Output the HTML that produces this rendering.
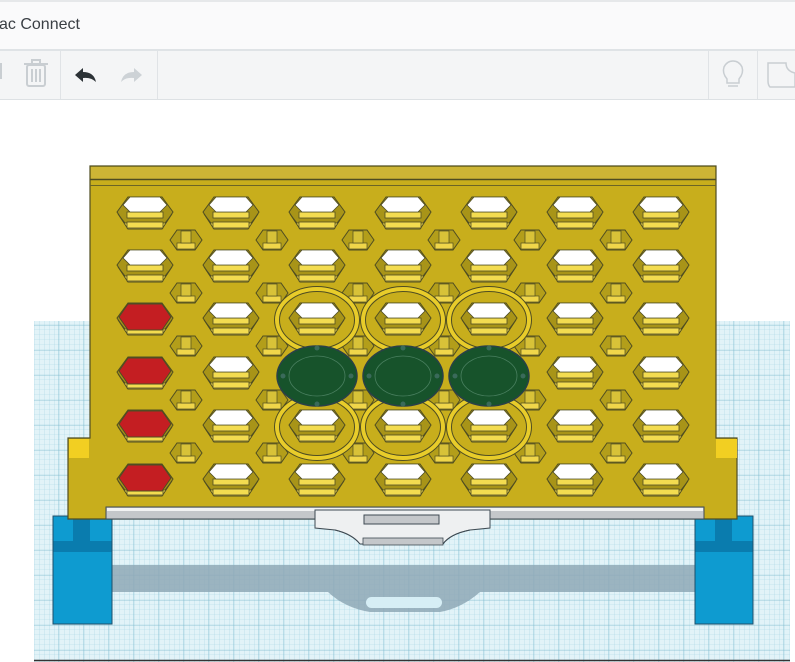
<!DOCTYPE html>
<html><head><meta charset="utf-8"><style>
body{margin:0;width:795px;height:662px;overflow:hidden;background:#fff;font-family:"Liberation Sans",sans-serif}
#hdr{position:absolute;left:0;top:0;width:795px;height:51px;background:#fafafb;border-top:2px solid #e6e8ea;box-sizing:border-box;border-bottom:2px solid #dfe3e6}
#hdr span{position:absolute;left:-1px;top:14px;font-size:16px;color:#3a3f44}
#tb{position:absolute;left:0;top:51px;width:795px;height:48px;background:#f4f5f6;border-bottom:1px solid #dde1e4}
</style></head><body>
<div id="hdr"><span>ac Connect</span></div>
<div id="tb">
<svg width="795" height="48" style="position:absolute;left:0;top:0">
<line x1="60.5" y1="0" x2="60.5" y2="48" stroke="#e0e3e6"/>
<line x1="157.5" y1="0" x2="157.5" y2="48" stroke="#e0e3e6"/>
<line x1="708.5" y1="0" x2="708.5" y2="48" stroke="#e0e3e6"/>
<line x1="757.5" y1="0" x2="757.5" y2="48" stroke="#e0e3e6"/>
<rect x="-2" y="12" width="4" height="16" fill="#c9ced2"/>
<g fill="none" stroke="#c9ced2" stroke-width="2"><rect x="27" y="14" width="18" height="21" rx="2"/><line x1="24" y1="13" x2="48" y2="13"/><rect x="32" y="9" width="8" height="4"/><line x1="32" y1="18" x2="32" y2="31"/><line x1="36" y1="18" x2="36" y2="31"/><line x1="40" y1="18" x2="40" y2="31"/></g>
<path d="M75 24 L83 17 L83 21 Q94 21 96 31 Q91 26 83 27 L83 31 Z" fill="#2c3236"/>
<path d="M142 24 L134 17 L134 21 Q123 21 121 31 Q126 26 134 27 L134 31 Z" fill="#cdd2d6"/>
<g fill="none" stroke="#c9ced2" stroke-width="1.5"><path d="M727 28 Q722 22 724 16 Q727 10 733 10 Q739 10 742 16 Q744 22 739 28 L739 32 L727 32 Z"/><line x1="728" y1="35" x2="738" y2="35"/><path d="M768 12 L786 12 Q786 20 795 22 L795 36 L770 36 Q768 34 768 30 Z"/></g>
</svg></div>
<svg width="795" height="562" style="position:absolute;left:0;top:100px" viewBox="0 100 795 562">
<defs>
<pattern id="g1" width="5" height="5" patternUnits="userSpaceOnUse"><path d="M5 0V5H0" fill="none" stroke="#a9d5e3" stroke-width="0.6"/></pattern>
<pattern id="g2" width="25" height="25" patternUnits="userSpaceOnUse" x="9" y="1"><path d="M25 0V25H0" fill="none" stroke="#7fbccf" stroke-width="0.8"/></pattern>
</defs>
<rect x="34" y="321" width="756" height="341" fill="#e2f3f8"/>
<rect x="34" y="321" width="756" height="341" fill="url(#g1)"/>
<rect x="34" y="321" width="756" height="341" fill="url(#g2)"/>
<line x1="34" y1="660.5" x2="790" y2="660.5" stroke="#333" stroke-width="1.5"/>
<path d="M112 565 L696 565 L696 592 L480 592 Q462 608 440 612 L370 612 Q345 608 328 592 L112 592 Z" fill="#8ea8b6" opacity="0.85"/>
<rect x="366" y="597" width="76" height="11" rx="5.5" fill="#d6eef5"/>
<g stroke="#1f4f6a" stroke-width="1">
<rect x="53" y="516" width="59" height="108" fill="#0e9bd0"/>
<rect x="695" y="516" width="58" height="108" fill="#0e9bd0"/>
</g>
<rect x="53.5" y="541" width="58" height="11" fill="#0a7cae"/>
<rect x="695.5" y="541" width="57" height="11" fill="#0a7cae"/>
<rect x="73" y="519" width="17" height="22" fill="#0a7cae"/>
<rect x="715" y="519" width="17" height="22" fill="#0a7cae"/>
<path d="M90 166 H716 V438 H737 V519 H68 V438 H90 Z" fill="#c8ae1c" stroke="#4f4d22" stroke-width="1.2"/>
<rect x="69" y="439" width="20" height="19" fill="#f2cf22"/>
<rect x="716" y="439" width="21" height="19" fill="#f2cf22"/>
<rect x="91" y="167" width="624" height="12" fill="#cdb535"/>
<line x1="90" y1="179.5" x2="716" y2="179.5" stroke="#4f4d22" stroke-width="1.5"/>
<line x1="90" y1="185.5" x2="716" y2="185.5" stroke="#6b6526" stroke-width="1"/>
<rect x="106" y="507" width="598" height="12" fill="#c4c7ca" stroke="#3e4a52" stroke-width="1"/>
<rect x="107" y="508" width="596" height="3" fill="#f2f3f3"/>
<path d="M315 510 H490 V528 L470 530 Q450 534 443 544 H360 Q352 534 335 530 L315 528 Z" fill="#eef0f1" stroke="#3e4a52"/>
<path d="M335 530 Q352 534 360 544 H443 Q450 534 470 530" fill="none" stroke="#3e4a52"/>
<rect x="363" y="538" width="80" height="7" fill="#c4c7ca" stroke="#3e4a52" stroke-width="0.8"/>
<rect x="364" y="515" width="75" height="9" fill="#c4c7ca" stroke="#3e4a52"/>
<g id="holes"></g>
</svg>
<script>
var g=document.getElementById('holes'),s='';
var xs=[145,231,317,403,489,575,661],ys=[212,265,318,372,425,479];
function big(x,y,red){
 s+='<polygon points="'+[x-28,y,x-17,y-15,x+17,y-15,x+28,y,x+17,y+17,x-17,y+17]+'" fill="#a89418" stroke="#4f4d22" stroke-width="1"/>';
 s+='<polygon points="'+[x-27,y+2,x-17,y+17,x+17,y+17,x+27,y+2,x+20,y+11,x-20,y+11]+'" fill="#e9d24a" stroke="#4f4d22" stroke-width="0.8"/>';
 s+='<rect x="'+(x-18)+'" y="'+(y)+'" width="36" height="6" fill="#f3dc50" stroke="#4f4d22" stroke-width="0.8"/>';
 s+='<rect x="'+(x-18)+'" y="'+(y+10)+'" width="36" height="6" fill="#f3dc50" stroke="#4f4d22" stroke-width="0.8"/>';
 if(red) s+='<polygon points="'+[x-26,y-1,x-17,y-14,x+17,y-14,x+26,y-1,x+17,y+12,x-17,y+12]+'" fill="#c41e22" stroke="#4f4d22" stroke-width="1"/>';
 else s+='<polygon points="'+[x-22,y-7,x-15,y-15,x+15,y-15,x+22,y-7,x+15,y,x-15,y]+'" fill="#fff" stroke="#4f4d22" stroke-width="0.8"/>';
}
function small(x,y){
 s+='<polygon points="'+[x-16,y,x-9,y-10,x+9,y-10,x+16,y,x+9,y+10,x-9,y+10]+'" fill="#b39e1a" stroke="#4f4d22" stroke-width="1"/>';
 s+='<rect x="'+(x-9)+'" y="'+(y+3)+'" width="18" height="6" fill="#f0d64a" stroke="#4f4d22" stroke-width="0.7"/>';
 s+='<rect x="'+(x-5)+'" y="'+(y-9)+'" width="10" height="12" fill="#d8c238" stroke="#4f4d22" stroke-width="0.7"/>';
}
var sy=[240,293,346,400,453];
for(var i=0;i<6;i++)for(var j=0;j<5;j++)small(186+86*i,sy[j]);
for(var i=0;i<7;i++)for(var j=0;j<6;j++)big(xs[i],ys[j],i==0&&j>=2);
[317,403,489].forEach(function(x){[318,425].forEach(function(y){
 s+='<ellipse cx="'+x+'" cy="'+(y+2)+'" rx="40" ry="31" fill="none" stroke="#4f4d22" stroke-width="6"/>';
 s+='<ellipse cx="'+x+'" cy="'+(y+2)+'" rx="40" ry="31" fill="none" stroke="#e8cc2a" stroke-width="4"/>';});
 s+='<ellipse cx="'+x+'" cy="376" rx="40" ry="30" fill="#17532b" stroke="#2a4048" stroke-width="1.5"/>';
 s+='<ellipse cx="'+x+'" cy="376" rx="28" ry="20" fill="none" stroke="#4a8060" stroke-width="0.8"/>';
 [[0,-28],[0,28],[-34,0],[34,0]].forEach(function(p){s+='<circle cx="'+(x+p[0])+'" cy="'+(376+p[1])+'" r="2.5" fill="#3a6a5a"/>';});
});
g.innerHTML=s;
</script>
</body></html>
